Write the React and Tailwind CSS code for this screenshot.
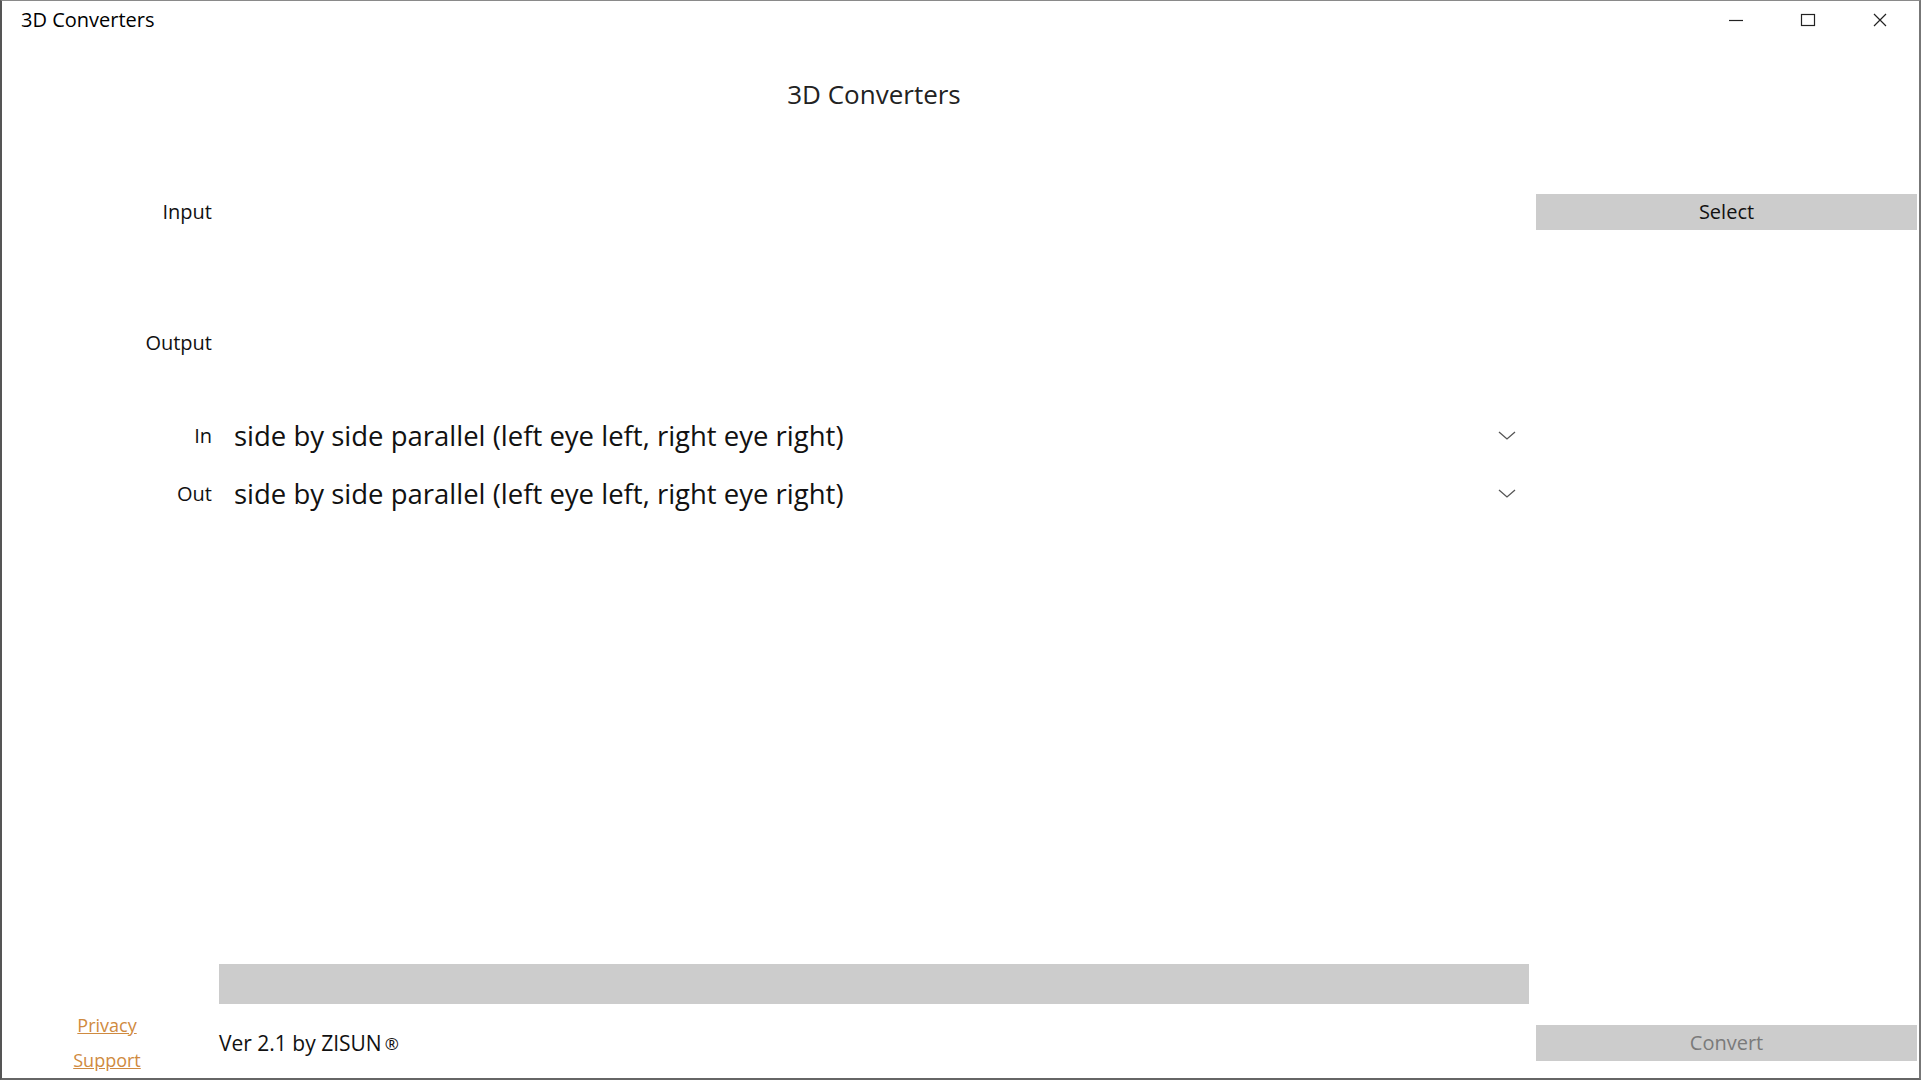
import React from 'react';

const font = { fontFamily: '"Open Sans", "Noto Sans", "Liberation Sans", sans-serif' };

function TitleBar() {
  return (
    <div className="flex h-[38px] items-center">
      <div className="flex-1 pl-[19px] text-[20px] text-black">3D Converters</div>
      <div className="flex h-full pr-[3px]">
        <div className="flex w-[72px] items-center justify-center">
          <svg width="16" height="16" viewBox="0 0 16 16"><path d="M1 8.5h14" stroke="#222" strokeWidth="1.2" /></svg>
        </div>
        <div className="flex w-[72px] items-center justify-center">
          <svg width="16" height="16" viewBox="0 0 16 16"><rect x="1.5" y="2.5" width="13" height="11" fill="none" stroke="#222" strokeWidth="1.2" /></svg>
        </div>
        <div className="flex w-[72px] items-center justify-center">
          <svg width="16" height="16" viewBox="0 0 16 16"><path d="M2 2l12 12M14 2L2 14" stroke="#222" strokeWidth="1.2" /></svg>
        </div>
      </div>
    </div>
  );
}

function Chevron() {
  return (
    <svg width="20" height="12" viewBox="0 0 20 12">
      <path d="M2 2l8 7 8-7" fill="none" stroke="#555" strokeWidth="1.3" />
    </svg>
  );
}

function Dropdown({ label, value }) {
  return (
    <div className="grid h-[44px] grid-cols-[210px_1310px_381px] gap-x-[7px]">
      <div className="flex items-center justify-end text-[20px] text-[#111]">{label}</div>
      <div className="flex items-center justify-between pl-[15px] pr-[12px]">
        <span className="text-[27.5px] text-[#111]">{value}</span>
        <Chevron />
      </div>
      <div />
    </div>
  );
}

export default function App() {
  const mode = 'side by side parallel (left eye left, right eye right)';
  return (
    <div style={font} className="flex h-[1080px] w-[1921px] flex-col overflow-hidden border-t border-l-2 border-r-2 border-b-2 border-t-[#8a8a8a] border-l-[#555] border-r-[#777] border-b-[#666] bg-white">
      <TitleBar />

      <div className="grid h-[110px] grid-cols-[210px_1310px_381px] gap-x-[7px]">
        <div />
        <div className="flex items-center justify-center text-[26px] text-[#222]">3D Converters</div>
        <div />
      </div>

      <div className="mt-[45px] grid h-[36px] grid-cols-[210px_1310px_381px] gap-x-[7px]">
        <div className="flex items-center justify-end text-[20px] text-[#111]">Input</div>
        <div />
        <button className="flex items-center justify-center bg-[#cccccc] text-[20px] text-[#111]">Select</button>
      </div>

      <div className="mt-[95px] grid h-[36px] grid-cols-[210px_1310px_381px] gap-x-[7px]">
        <div className="flex items-center justify-end text-[20px] text-[#111]">Output</div>
        <div />
        <div />
      </div>

      <div className="mt-[53px]">
        <Dropdown label="In" value={mode} />
      </div>
      <div className="mt-[14px]">
        <Dropdown label="Out" value={mode} />
      </div>

      <div className="flex-1" />

      <div className="grid h-[40px] grid-cols-[210px_1310px_381px] gap-x-[7px]">
        <div />
        <div className="bg-[#cccccc]" />
        <div />
      </div>

      <div className="grid h-[74px] grid-cols-[210px_1310px_381px] gap-x-[7px]">
        <div className="flex flex-col items-center pt-[8px] text-[18px] text-[#cf8a40]">
          <a className="underline">Privacy</a>
          <a className="mt-[8px] underline">Support</a>
        </div>
        <div className="flex items-center pt-[5px] text-[21px] text-[#111]">Ver 2.1 by ZISUN<span className="ml-[3px] text-[17px]">®</span></div>
        <div className="flex items-start pt-[21px]">
          <button className="flex h-[36px] w-full items-center justify-center bg-[#cccccc] text-[20px] text-[#7a7a7a]">Convert</button>
        </div>
      </div>
    </div>
  );
}
